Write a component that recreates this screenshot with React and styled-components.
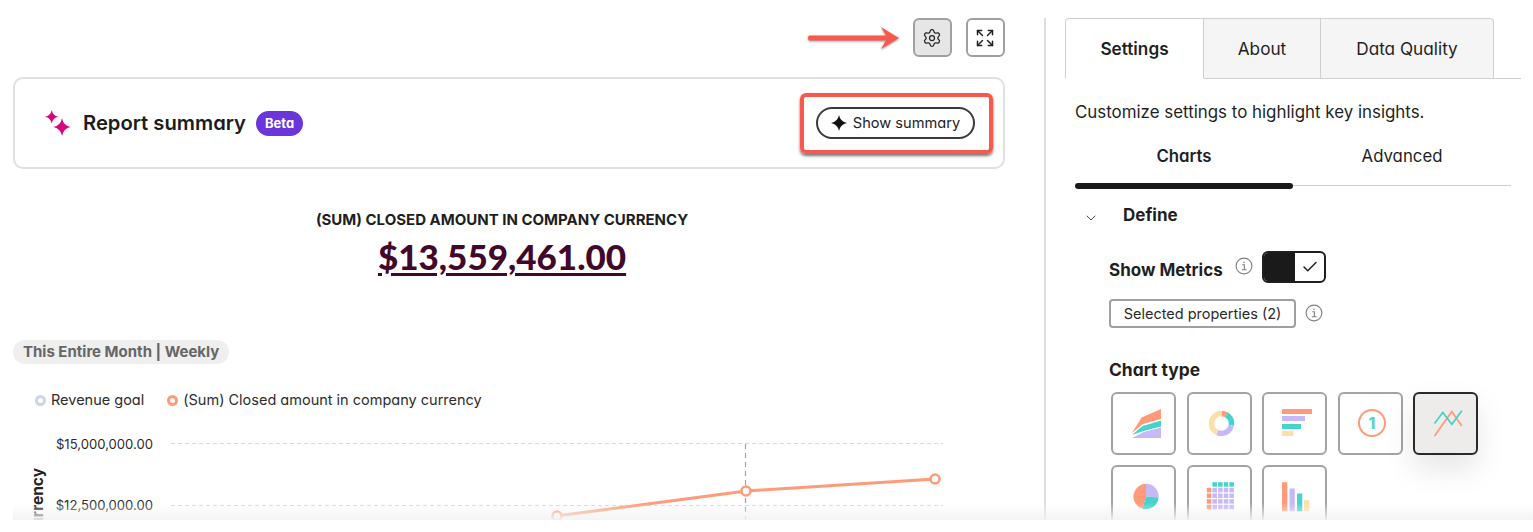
import React from "react";
import styled, { createGlobalStyle } from "styled-components";
import { Settings, Expand, Check, ChevronDown } from "lucide-react";

const GlobalStyle = createGlobalStyle`
  html, body {
    margin: 0;
    background: #fff;
  }
  body {
    font-family: "Inter", "Liberation Sans", sans-serif;
    font-feature-settings: "cv11" 1;
    color: #1f1f1f;
  }
  * {
    box-sizing: border-box;
  }
`;

const Page = styled.div`
  position: relative;
  display: flex;
  height: 520px;
  overflow: hidden;
`;

const BottomFade = styled.div`
  position: absolute;
  left: 13px;
  right: 0;
  bottom: 0;
  height: 17px;
  background: linear-gradient(rgba(243, 243, 243, 0), rgba(243, 243, 243, 0.92));
`;

const Report = styled.main`
  width: 1044px;
  flex: none;
  padding: 18px 39px 0 13px;
`;

const Toolbar = styled.div`
  display: flex;
  justify-content: flex-end;
  align-items: center;
  gap: 14px;
`;

const Arrow = styled.svg`
  filter: drop-shadow(0 1px 1px rgba(0, 0, 0, 0.4));
`;

const IconButton = styled.button`
  display: flex;
  align-items: center;
  justify-content: center;
  width: 39px;
  height: 39px;
  padding: 0 1px 0 0;
  border: 2px solid #a0a0a0;
  border-radius: 6px;
  color: #222;
  background: ${(props) => (props.$active ? "#e6e6e6" : "#fff")};
`;

const SummaryCard = styled.section`
  display: flex;
  align-items: center;
  justify-content: space-between;
  height: 92px;
  margin-top: 20px;
  padding: 0 10px 0 30px;
  border: 2px solid #e0e0e0;
  border-radius: 10px;
`;

const SummaryTitle = styled.div`
  display: flex;
  align-items: center;
`;

const SummaryName = styled.h2`
  margin: 0 10px 2px 12px;
  font-size: 20.2px;
  font-weight: 600;
  color: #1c1c1c;
`;

const BetaBadge = styled.span`
  display: flex;
  align-items: center;
  height: 25px;
  padding: 0 9px;
  border-radius: 13px;
  font-size: 13px;
  font-weight: 700;
  color: #fff;
  background: #6a35d9;
`;

const Highlight = styled.div`
  display: flex;
  align-items: center;
  justify-content: center;
  width: 193px;
  height: 61px;
  padding-right: 2px;
  border: 4px solid #f9584d;
  border-radius: 6px;
  box-shadow: 0 2px 3px rgba(0, 0, 0, 0.55);
`;

const PillButton = styled.button`
  display: flex;
  align-items: center;
  justify-content: center;
  gap: 6px;
  width: 159px;
  height: 32px;
  padding: 0;
  border: 2px solid #3a3a3a;
  border-radius: 16px;
  font: inherit;
  font-feature-settings: inherit;
  font-size: 14.6px;
  color: #222;
  background: #fff;
`;

const Metric = styled.div`
  padding-right: 14px;
  text-align: center;
`;

const MetricLabel = styled.div`
  margin-top: 41px;
  font-size: 15px;
  line-height: 20px;
  font-weight: 700;
  color: #1e1e1e;
`;

const MetricValue = styled.a`
  display: block;
  margin-top: 4px;
  font-family: "Lato", "Liberation Sans", sans-serif;
  font-size: 35px;
  line-height: 44px;
  font-weight: 900;
  color: #42082b;
  text-decoration: underline;
  text-decoration-thickness: 3px;
  text-underline-offset: 3px;
`;

const DatePill = styled.span`
  display: inline-block;
  margin-top: 62px;
  padding: 0 10px;
  border-radius: 12px;
  font-size: 15px;
  line-height: 24px;
  font-weight: 700;
  color: #666;
  background: #efefef;
`;

const Legend = styled.div`
  display: flex;
  gap: 23px;
  margin-top: 26px;
  padding-left: 22px;
  font-size: 14.5px;
  line-height: 20px;
  color: #2c2c2c;
`;

const LegendItem = styled.span`
  display: flex;
  align-items: center;
  gap: 5px;
`;

const LegendDot = styled.i`
  width: 11px;
  height: 11px;
  border: 3px solid ${(props) => props.$color};
  border-radius: 50%;
`;

const Chart = styled.svg`
  display: block;
  margin-top: 21px;
  font-size: 13.1px;
  fill: #2c2c2c;
`;

const AxisTitle = styled.text`
  font-size: 15.5px;
  font-weight: 700;
  fill: #222;
`;

const Sidebar = styled.aside`
  flex: 1;
  margin-top: 18px;
  padding-right: 12px;
  padding-left: 19px;
  border-left: 2px solid #dedede;
`;

const TabRow = styled.div`
  display: flex;
  height: 61px;
  border-bottom: 1px solid #cfcfcf;
`;

const Tab = styled.div`
  display: flex;
  align-items: center;
  justify-content: center;
  width: ${(props) => props.$width}px;
  height: 61px;
  border: 1px solid #cfcfcf;
  border-left-width: ${(props) => (props.$first ? 1 : 0)}px;
  border-bottom-color: ${(props) => (props.$active ? "#fff" : "#cfcfcf")};
  border-radius: ${(props) => (props.$first ? "4px 0 0 0" : props.$last ? "0 4px 0 0" : "0")};
  font-size: 17.2px;
  font-weight: ${(props) => (props.$active ? 600 : 400)};
  background: ${(props) => (props.$active ? "#fff" : "#f5f5f5")};
`;

const SidebarBody = styled.div`
  padding: 0 10px;
`;

const Intro = styled.p`
  margin: 21px 0 0;
  font-size: 16.9px;
  line-height: 24px;
  font-weight: 400;
`;

const SubTabRow = styled.div`
  display: grid;
  grid-template-columns: 1fr 1fr;
  height: 51px;
  margin-top: 11px;
  border-bottom: 1px solid #cfcfcf;
`;

const SubTab = styled.div`
  position: relative;
  padding-top: 9px;
  text-align: center;
  font-size: 16.8px;
  line-height: 24px;
  font-weight: ${(props) => (props.$active ? 600 : 400)};

  &::after {
    content: "";
    display: ${(props) => (props.$active ? "block" : "none")};
    position: absolute;
    left: 0;
    right: 0;
    bottom: -3.5px;
    height: 6px;
    border-radius: 3px;
    background: #1a1a1a;
  }
`;

const DefineRow = styled.div`
  display: flex;
  align-items: center;
  gap: 24px;
  height: 24px;
  margin-top: 17px;
  padding-left: 8px;
  font-size: 17px;
  font-weight: 700;
`;

const DefineChevron = styled(ChevronDown)`
  margin-top: 6px;
`;

const Section = styled.div`
  padding-left: 34px;
`;

const FieldLabel = styled.div`
  font-size: 17px;
  line-height: 24px;
  font-weight: 700;
`;

const MetricsRow = styled.div`
  display: flex;
  align-items: center;
  height: 32px;
  margin-top: 24px;
`;

const MetricsLabel = styled(FieldLabel)`
  width: 126px;
  margin-top: 6px;
`;

const InfoIcon = styled.svg`
  flex: none;
  margin-top: -2px;
`;

const Toggle = styled.div`
  display: flex;
  width: 64px;
  height: 32px;
  margin-left: 9px;
  border: 2px solid #1f1f1f;
  border-radius: 6px;
  overflow: hidden;
`;

const ToggleOn = styled.div`
  width: 31px;
  background: #1a1a1a;
`;

const ToggleOff = styled.div`
  display: flex;
  flex: 1;
  align-items: center;
  justify-content: center;
  color: #222;
`;

const PropsRow = styled.div`
  display: flex;
  align-items: center;
  gap: 9px;
  margin-top: 16px;
`;

const PropsButton = styled.button`
  width: 187px;
  height: 29px;
  padding: 0;
  border: 2px solid #a0a0a0;
  border-radius: 4px;
  font: inherit;
  font-feature-settings: inherit;
  font-size: 14.5px;
  color: #2a2a2a;
  background: #fff;
`;

const ChartTypeLabel = styled(FieldLabel)`
  margin-top: 30px;
  font-size: 17.4px;
`;

const TileGrid = styled.div`
  display: grid;
  grid-template-columns: repeat(5, 65px);
  gap: 10px 10.5px;
  margin-top: 10px;
  padding-left: 2px;
`;

const Tile = styled.div`
  display: flex;
  align-items: center;
  justify-content: center;
  height: 63px;
  border: 2px solid ${(props) => (props.$active ? "#2a2a2a" : "#a3a3a3")};
  border-radius: 6px;
  background: ${(props) => (props.$active ? "#eeecea" : "#fff")};
  box-shadow: ${(props) => (props.$active ? "0 14px 30px rgba(0, 0, 0, 0.1)" : "none")};
`;

const ORANGE = "#ff9b78";
const TEAL = "#46d3cb";
const PURPLE = "#c8b8f8";
const YELLOW = "#fddfa8";

const star = (cx, cy, r) => {
  const k = r * 0.16;
  return `M${cx} ${cy - r}Q${cx + k} ${cy - k} ${cx + r} ${cy}Q${cx + k} ${cy + k} ${cx} ${cy + r}Q${cx - k} ${cy + k} ${cx - r} ${cy}Q${cx - k} ${cy - k} ${cx} ${cy - r}Z`;
};

const Info = () => (
  <InfoIcon width="18" height="18" viewBox="0 0 18 18" fill="none" stroke="#808080" strokeWidth="1.1">
    <circle cx="9" cy="9" r="7.9" />
    <path d="M7.2 7.8H9.4V12.8M6.9 12.8H11.7" />
    <circle cx="9" cy="5.2" r="0.8" fill="#808080" stroke="none" />
  </InfoIcon>
);

const TileIcon = ({ children }) => (
  <svg width="36" height="36" viewBox="0 0 36 36" style={{ overflow: "visible" }}>
    {children}
  </svg>
);

const AreaIcon = () => (
  <TileIcon>
    <path d="M6 27L15.5 11.5L35 3V13L17 18Z" fill={ORANGE} />
    <path d="M6 29L16.5 20L35 14.5V20.5L17.5 25Z" fill={TEAL} />
    <path d="M6 32L18 26L35 21.5V32Z" fill={PURPLE} />
  </TileIcon>
);

const DonutIcon = () => (
  <TileIcon>
    <g transform="rotate(-90 20.5 17.5)" fill="none" strokeWidth="5.5">
      <circle cx="20.5" cy="17.5" r="10" pathLength="100" stroke={ORANGE} strokeDasharray="8 92" />
      <circle cx="20.5" cy="17.5" r="10" pathLength="100" stroke={TEAL} strokeDasharray="20 80" strokeDashoffset="-8" />
      <circle cx="20.5" cy="17.5" r="10" pathLength="100" stroke={PURPLE} strokeDasharray="29 71" strokeDashoffset="-28" />
      <circle cx="20.5" cy="17.5" r="10" pathLength="100" stroke={YELLOW} strokeDasharray="43 57" strokeDashoffset="-57" />
    </g>
  </TileIcon>
);

const HBarsIcon = () => (
  <TileIcon>
    <rect x="5" y="3" width="30" height="5" fill={ORANGE} />
    <rect x="5" y="10" width="23" height="5" fill={PURPLE} />
    <rect x="5" y="18" width="19" height="5" fill={TEAL} />
    <rect x="5" y="25" width="11.5" height="5" fill={YELLOW} />
  </TileIcon>
);

const KpiIcon = () => (
  <TileIcon>
    <circle cx="20" cy="17" r="13" fill="none" stroke={ORANGE} strokeWidth="2" />
    <text x="20" y="23" textAnchor="middle" fontSize="16" fontWeight="700" fontFamily="Inter, sans-serif" fill={TEAL}>1</text>
  </TileIcon>
);

const LineIcon = () => (
  <TileIcon>
    <path d="M6.5 30L23.8 5.5L33.8 20" fill="none" stroke={ORANGE} strokeWidth="1.8" />
    <path d="M6.5 17.5L14.8 6.5L23.8 18.2L33.8 4.8" fill="none" stroke={TEAL} strokeWidth="1.8" />
  </TileIcon>
);

const PieIcon = () => (
  <TileIcon>
    <path d="M20 17.5V4.8A12.7 12.7 0 0 1 32.65 18.6Z" fill={PURPLE} />
    <path d="M20 17.5L32.65 18.6A12.7 12.7 0 0 1 16.3 29.65Z" fill={TEAL} />
    <path d="M20 17.5L16.3 29.65A12.7 12.7 0 0 1 20 4.8Z" fill={ORANGE} />
  </TileIcon>
);

const cellColor = (col, row) => {
  if (row === 0) return col === 0 ? "none" : TEAL;
  return col === 0 ? ORANGE : PURPLE;
};

const HeatIcon = () => (
  <TileIcon>
    {[0, 1, 2, 3, 4].map((col) =>
      [0, 1, 2, 3, 4].map((row) => (
        <rect
          key={`${col}-${row}`}
          x={5.8 + col * 5.65}
          y={3.2 + row * 5.65}
          width="4.5"
          height="4.5"
          fill={cellColor(col, row)}
        />
      ))
    )}
  </TileIcon>
);

const VBarsIcon = () => (
  <TileIcon>
    <rect x="5" y="3.2" width="5.3" height="29" fill={ORANGE} />
    <rect x="12.5" y="9.5" width="5.3" height="22.7" fill={PURPLE} />
    <rect x="20" y="14.5" width="5.3" height="17.7" fill={TEAL} />
    <rect x="27" y="21.2" width="5.3" height="11" fill={YELLOW} />
  </TileIcon>
);

const tiles = [AreaIcon, DonutIcon, HBarsIcon, KpiIcon, LineIcon, PieIcon, HeatIcon, VBarsIcon];

const RevenueChart = () => (
  <Chart width="992" height="100" viewBox="13 430 992 100">
    <g stroke="#d0dbe8" strokeDasharray="4 3" strokeWidth="1">
      <line x1="171" y1="442.5" x2="943" y2="442.5" />
      <line x1="171" y1="504.5" x2="943" y2="504.5" />
    </g>
    <line x1="745.5" y1="443" x2="745.5" y2="520" stroke="#8fa8c2" strokeWidth="1.2" strokeDasharray="5 4" />
    <text x="153" y="448" textAnchor="end">$15,000,000.00</text>
    <text x="153" y="509" textAnchor="end">$12,500,000.00</text>
    <AxisTitle x="0" y="0" textAnchor="end" transform="translate(43 467) rotate(-90)">
      (Sum) Closed amount in company currency
    </AxisTitle>
    <polyline points="557,515 746,490 935,478" fill="none" stroke={ORANGE} strokeWidth="3" />
    {[[557, 515], [746, 490], [935, 478]].map(([cx, cy]) => (
      <circle key={cx} cx={cx} cy={cy} r="4.5" fill="#fff" stroke={ORANGE} strokeWidth="2.6" />
    ))}
  </Chart>
);

const App = () => (
  <Page>
    <GlobalStyle />
    <Report>
      <Toolbar>
        <Arrow width="93" height="28" viewBox="0 0 93 28">
          <path d="M3 11.5H80L75 3L93 14L75 25L80 16.5H3Q1 14 3 11.5Z" fill="#f9584d" />
        </Arrow>
        <IconButton $active>
          <Settings size={20} strokeWidth={1.5} />
        </IconButton>
        <IconButton>
          <Expand size={20} strokeWidth={1.8} />
        </IconButton>
      </Toolbar>

      <SummaryCard>
        <SummaryTitle>
          <svg width="26" height="26" viewBox="0 0 26 26" fill="#d6087f">
            <path d={star(6.7, 6.7, 6.7)} />
            <path d={star(17, 17, 8.8)} />
          </svg>
          <SummaryName>Report summary</SummaryName>
          <BetaBadge>Beta</BetaBadge>
        </SummaryTitle>
        <Highlight>
          <PillButton>
            <svg width="16" height="16" viewBox="0 0 16 16" fill="#111">
              <path d={star(8, 8, 8)} />
            </svg>
            Show summary
          </PillButton>
        </Highlight>
      </SummaryCard>

      <Metric>
        <MetricLabel>(SUM) CLOSED AMOUNT IN COMPANY CURRENCY</MetricLabel>
        <MetricValue>$13,559,461.00</MetricValue>
      </Metric>

      <DatePill>This Entire Month | Weekly</DatePill>

      <Legend>
        <LegendItem>
          <LegendDot $color="#c8d6e5" />
          Revenue goal
        </LegendItem>
        <LegendItem>
          <LegendDot $color={ORANGE} />
          (Sum) Closed amount in company currency
        </LegendItem>
      </Legend>

      <RevenueChart />
    </Report>

    <Sidebar>
      <TabRow>
        <Tab $width={139} $first $active>Settings</Tab>
        <Tab $width={117}>About</Tab>
        <Tab $width={173} $last>Data Quality</Tab>
      </TabRow>

      <SidebarBody>
        <Intro>Customize settings to highlight key insights.</Intro>

        <SubTabRow>
          <SubTab $active>Charts</SubTab>
          <SubTab>Advanced</SubTab>
        </SubTabRow>

        <DefineRow>
          <DefineChevron size={16} strokeWidth={1.2} />
          Define
        </DefineRow>

        <Section>
          <MetricsRow>
            <MetricsLabel>Show Metrics</MetricsLabel>
            <Info />
            <Toggle>
              <ToggleOn />
              <ToggleOff>
                <Check size={18} strokeWidth={2} />
              </ToggleOff>
            </Toggle>
          </MetricsRow>

          <PropsRow>
            <PropsButton>Selected properties (2)</PropsButton>
            <Info />
          </PropsRow>

          <ChartTypeLabel>Chart type</ChartTypeLabel>

          <TileGrid>
            {tiles.map((Icon, i) => (
              <Tile key={i} $active={i === 4}>
                <Icon />
              </Tile>
            ))}
          </TileGrid>
        </Section>
      </SidebarBody>
    </Sidebar>

    <BottomFade />
  </Page>
);

export default App;
